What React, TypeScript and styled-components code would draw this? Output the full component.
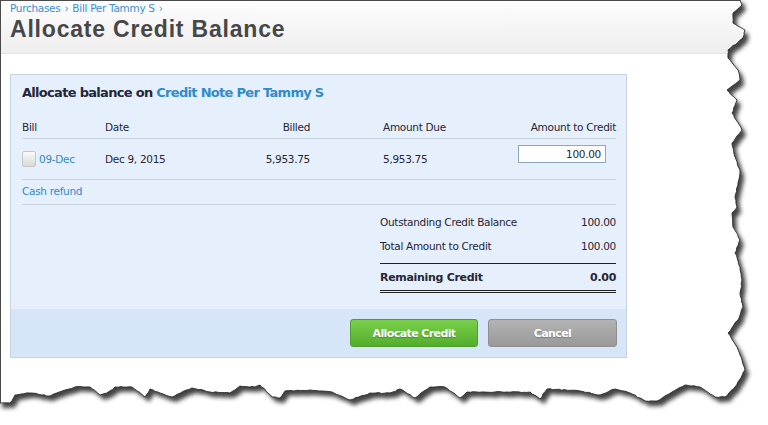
import React from "react";
import styled, { createGlobalStyle } from "styled-components";

const GlobalStyle = createGlobalStyle`
  html, body { margin: 0; padding: 0; background: #fff; }
  body {
    font-family: "DejaVu Sans", Verdana, sans-serif;
    font-size: 10.5px;
    letter-spacing: -0.3px;
    color: #262636;
  }
`;

const Root = styled.div`
  position: relative;
  width: 768px;
  height: 425px;
  overflow: hidden;
  background: #fff;
`;

const Paper = styled.div`
  width: 748px;
  height: 404px;
  box-sizing: border-box;
  border-top: 1px solid #4a4a4a;
  border-left: 1px solid #4a4a4a;
  display: flex;
  flex-direction: column;
  background: #fff;
`;

const Header = styled.header`
  height: 52px;
  padding-left: 9px;
  border-bottom: 1px solid #e2e2e2;
  background: linear-gradient(#fdfdfd, #eeeeee);
  display: flex;
  flex-direction: column;
`;

const Breadcrumb = styled.nav`
  line-height: 14px;
  font-size: 10.5px;
  color: #3d8fcf;
  display: flex;
  gap: 4px;
`;

const Crumb = styled.span`
  color: #3d8fcf;
`;

const Title = styled.h1`
  margin: 0;
  font-family: "Liberation Sans", Arial, sans-serif;
  font-weight: bold;
  font-size: 23px;
  letter-spacing: 0.8px;
  line-height: 28px;
  color: #474747;
`;

const Body = styled.main`
  padding: 20px 0 0 9px;
`;

const Panel = styled.section`
  width: 617px;
  box-sizing: border-box;
  border: 1px solid #c6d2e0;
  background: #e6effc;
`;

const PanelContent = styled.div`
  padding: 10px 10px 16px 11px;
`;

const PanelTitle = styled.h2`
  margin: 0 0 16px;
  font-size: 13px;
  font-weight: bold;
  letter-spacing: -0.7px;
  line-height: 16px;
  color: #262636;
`;

const Link = styled.span<{ $bold?: boolean }>`
  color: #2f8bc9;
  font-weight: ${(p) => (p.$bold ? "bold" : "normal")};
`;

const Row = styled.div<{ $h: number }>`
  display: grid;
  grid-template-columns: 83px 120px 85px 173px 133px;
  height: ${(p) => p.$h}px;
  border-bottom: 1px solid #c9d3de;
`;

const Cell = styled.div<{ $right?: boolean; $pt: number; $pl?: number }>`
  padding-top: ${(p) => p.$pt}px;
  padding-left: ${(p) => p.$pl ?? 0}px;
  line-height: 14px;
  text-align: ${(p) => (p.$right ? "right" : "left")};
  display: flex;
  align-items: flex-start;
  justify-content: ${(p) => (p.$right ? "flex-end" : "flex-start")};
  gap: 3px;
  white-space: nowrap;
`;

const DocIcon = styled.svg`
  flex: none;
  margin-top: -1px;
`;

const AmountInput = styled.input`
  width: 88px;
  height: 18px;
  box-sizing: border-box;
  margin: 6px 10px 0 0;
  border: 1px solid #8ea6c2;
  padding: 0 4px;
  font-family: "DejaVu Sans", Verdana, sans-serif;
  font-size: 10.5px;
  letter-spacing: -0.3px;
  color: #262636;
  text-align: right;
  background: #fff;
  outline: none;
`;

const RefundRow = styled.div`
  height: 25px;
  padding-top: 4px;
  box-sizing: border-box;
  line-height: 14px;
  border-bottom: 1px solid #c9d3de;
`;

const Summary = styled.div`
  width: 236px;
  margin-left: auto;
  padding-top: 5px;
`;

const SummaryRow = styled.div<{ $total?: boolean }>`
  display: flex;
  justify-content: space-between;
  height: ${(p) => (p.$total ? 26 : 24)}px;
  line-height: ${(p) => (p.$total ? 27 : 24)}px;
  font-weight: ${(p) => (p.$total ? "bold" : "normal")};
  font-size: ${(p) => (p.$total ? 11 : 10.5)}px;
  margin-top: ${(p) => (p.$total ? 5 : 0)}px;
  border-top: ${(p) => (p.$total ? "1px solid #222" : "none")};
  border-bottom: ${(p) => (p.$total ? "3px double #222" : "none")};
`;

const Footer = styled.footer`
  height: 48px;
  background: #d7e5f8;
  display: flex;
  justify-content: flex-end;
  align-items: center;
  gap: 10px;
  padding-right: 9px;
`;

const Button = styled.button<{ $primary?: boolean; $w: number }>`
  width: ${(p) => p.$w}px;
  height: 28px;
  border-radius: 3px;
  border: 1px solid ${(p) => (p.$primary ? "#4f9d2c" : "#8f8f8f")};
  background: ${(p) =>
    p.$primary
      ? "linear-gradient(#78d04a, #55ad2d)"
      : "linear-gradient(#b3b3b3, #999999)"};
  color: #fff;
  font-family: "DejaVu Sans", Verdana, sans-serif;
  font-weight: bold;
  font-size: 11px;
  letter-spacing: -0.6px;
  text-shadow: 0 1px 1px rgba(0, 0, 0, 0.25);
  cursor: pointer;
  padding: 0;
`;

const EdgeSvg = styled.svg`
  position: absolute;
  left: 0;
  top: 0;
  pointer-events: none;
`;

const basePts: [number, number][] = [
  [740, 0], [742, 5], [733, 13], [733, 23], [745, 30], [743, 38], [728, 50], [728, 58],
  [738, 70], [740, 80], [727, 90], [737, 100], [732, 113], [742, 130], [732, 143],
  [735, 157], [740, 170], [738, 183], [735, 197], [737, 207], [732, 213], [733, 227],
  [740, 240], [735, 253], [740, 267], [742, 280], [740, 293], [743, 307], [738, 320],
  [728, 333], [737, 347], [742, 360], [745, 370], [735, 387], [725, 397], [715, 397],
  [700, 387], [685, 385], [672, 392], [657, 401], [645, 401], [630, 393], [615, 389],
  [600, 395], [580, 391], [547, 389], [540, 399], [530, 392], [495, 392], [467, 392],
  [460, 398], [445, 387], [430, 387], [415, 398], [400, 389], [390, 393], [370, 393],
  [350, 400], [332, 392], [310, 390], [285, 391], [280, 398], [272, 397], [260, 385],
  [255, 387], [240, 386], [230, 393], [210, 392], [192, 388], [172, 397], [160, 393],
  [150, 389], [145, 397], [132, 387], [115, 387], [107, 393], [100, 395], [90, 387],
  [75, 387], [65, 390], [50, 396], [30, 393], [15, 395], [10, 403], [0, 403],
];

function buildEdge(): [number, number][] {
  let seed = 7;
  const rnd = () => {
    seed = (seed * 16807) % 2147483647;
    return seed / 2147483647 - 0.5;
  };
  const out: [number, number][] = [];
  for (let i = 0; i < basePts.length - 1; i++) {
    const [x1, y1] = basePts[i];
    const [x2, y2] = basePts[i + 1];
    const d = Math.hypot(x2 - x1, y2 - y1);
    const n = Math.max(1, Math.round(d / 3));
    for (let k = 0; k < n; k++) {
      const t = k / n;
      const j = k === 0 ? 0 : 1.0;
      out.push([x1 + (x2 - x1) * t + rnd() * j, y1 + (y2 - y1) * t + rnd() * j]);
    }
  }
  out.push(basePts[basePts.length - 1]);
  return out;
}

const edge = buildEdge();
const edgeStr = edge.map(([x, y]) => `${x.toFixed(1)},${y.toFixed(1)}`).join(" L");
const paperPath = `M-2,-2 L740,-2 L${edgeStr} L-2,403 Z`;
const outsidePath = `M-5,-5 H775 V430 H-5 Z ${paperPath}`;
const edgeLine = `M${edgeStr}`;

const TornEdge = () => (
  <EdgeSvg width="768" height="425" viewBox="0 0 768 425">
    <defs>
      <filter id="blur" x="-5%" y="-5%" width="110%" height="110%">
        <feGaussianBlur stdDeviation="2" />
      </filter>
      <clipPath id="outside">
        <path d={outsidePath} clipRule="evenodd" />
      </clipPath>
    </defs>
    <path d={outsidePath} fill="#fff" fillRule="evenodd" />
    <g clipPath="url(#outside)">
      <path
        d={paperPath}
        transform="translate(4 5)"
        fill="#2e2e2e"
        opacity="0.9"
        filter="url(#blur)"
      />
    </g>
    <path d={edgeLine} fill="none" stroke="#2a2a2a" strokeWidth="0.9" />
  </EdgeSvg>
);

const BillIcon = () => (
  <DocIcon width="14" height="16" viewBox="0 0 14 16">
    <defs>
      <linearGradient id="doc" x1="0" y1="0" x2="0" y2="1">
        <stop offset="0" stopColor="#fbfbfb" />
        <stop offset="1" stopColor="#d8d8d8" />
      </linearGradient>
    </defs>
    <rect x="0.5" y="0.5" width="13" height="15" rx="1.5" fill="url(#doc)" stroke="#c6c6c6" />
  </DocIcon>
);

export default function App() {
  return (
    <Root>
      <GlobalStyle />
      <Paper>
        <Header>
          <Breadcrumb>
            <Crumb>Purchases</Crumb>
            <Crumb>›</Crumb>
            <Crumb>Bill Per Tammy S</Crumb>
            <Crumb>›</Crumb>
          </Breadcrumb>
          <Title>Allocate Credit Balance</Title>
        </Header>
        <Body>
          <Panel>
            <PanelContent>
              <PanelTitle>
                Allocate balance on <Link $bold>Credit Note Per Tammy S</Link>
              </PanelTitle>
              <Row $h={21}>
                <Cell $pt={3}>Bill</Cell>
                <Cell $pt={3}>Date</Cell>
                <Cell $pt={3} $right>Billed</Cell>
                <Cell $pt={3} $pl={73}>Amount Due</Cell>
                <Cell $pt={3} $right>Amount to Credit</Cell>
              </Row>
              <Row $h={40}>
                <Cell $pt={13}>
                  <BillIcon />
                  <Link>09-Dec</Link>
                </Cell>
                <Cell $pt={13}>Dec 9, 2015</Cell>
                <Cell $pt={13} $right>5,953.75</Cell>
                <Cell $pt={13} $pl={73}>5,953.75</Cell>
                <Cell $pt={0} $right>
                  <AmountInput defaultValue="100.00" />
                </Cell>
              </Row>
              <RefundRow>
                <Link>Cash refund</Link>
              </RefundRow>
              <Summary>
                <SummaryRow>
                  <span>Outstanding Credit Balance</span>
                  <span>100.00</span>
                </SummaryRow>
                <SummaryRow>
                  <span>Total Amount to Credit</span>
                  <span>100.00</span>
                </SummaryRow>
                <SummaryRow $total>
                  <span>Remaining Credit</span>
                  <span>0.00</span>
                </SummaryRow>
              </Summary>
            </PanelContent>
            <Footer>
              <Button $primary $w={128}>Allocate Credit</Button>
              <Button $w={129}>Cancel</Button>
            </Footer>
          </Panel>
        </Body>
      </Paper>
      <TornEdge />
    </Root>
  );
}
